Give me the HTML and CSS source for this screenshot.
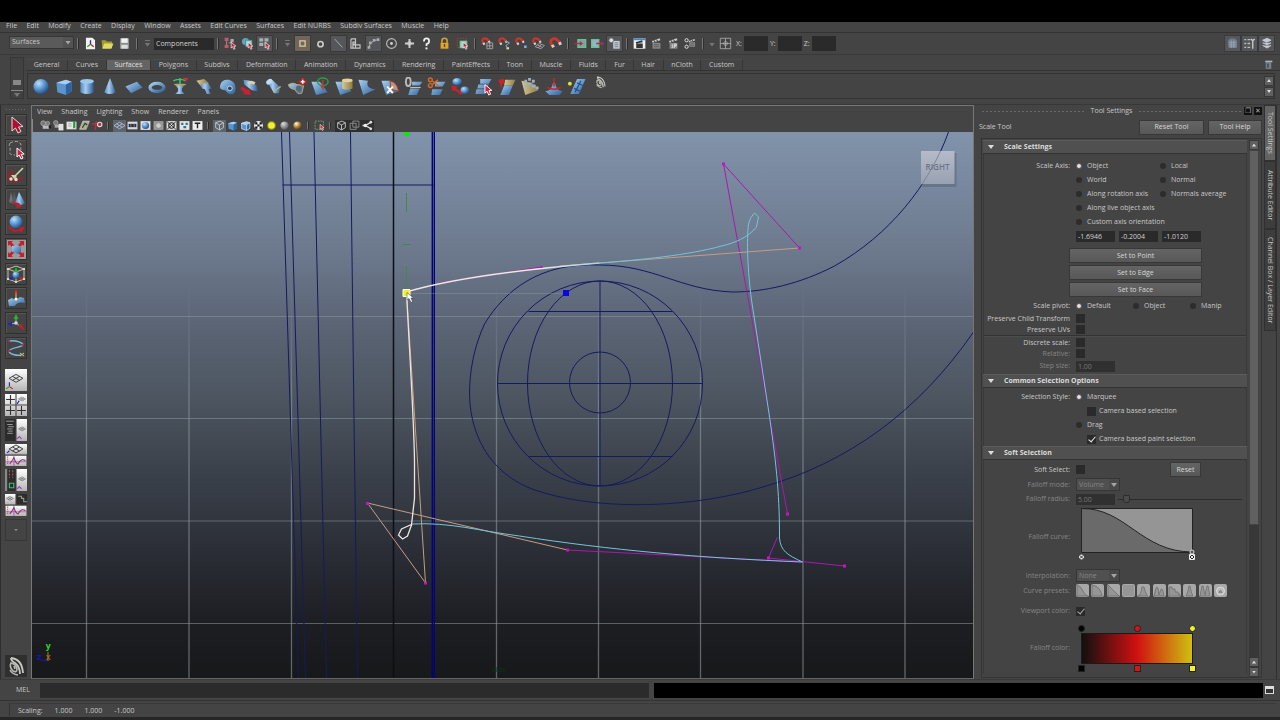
FILE: index.html
```html
<!DOCTYPE html>
<html lang="en">
<head>
    <meta charset="UTF-8">
    <meta name="viewport" content="width=device-width, initial-scale=1.0">
    <title>Scale Tool</title>
    <link rel="stylesheet" href="styles.css">
</head>
<body>

<!-- icon sprite -->
<svg class="sprite" aria-hidden="true">
    <defs>
        <linearGradient id="blue" x1="0" y1="0" x2="1" y2="1"><stop offset="0" stop-color="#a8d0f2"/><stop offset="1" stop-color="#2c609c"/></linearGradient>
        <linearGradient id="tube" x1="0" y1="0" x2="1" y2="0"><stop offset="0" stop-color="#4f86c0"/><stop offset=".4" stop-color="#a5cdf0"/><stop offset="1" stop-color="#2c5c94"/></linearGradient>
        <linearGradient id="tan" x1="0" y1="0" x2="1" y2="0"><stop offset="0" stop-color="#d6c793"/><stop offset="1" stop-color="#8d7c45"/></linearGradient>
        <linearGradient id="pane" x1="0" y1="0" x2="0" y2="1"><stop offset="0" stop-color="#ffffff"/><stop offset="1" stop-color="#b4b4b4"/></linearGradient>
        <radialGradient id="ball" cx=".35" cy=".3" r=".75"><stop offset="0" stop-color="#bfe0fa"/><stop offset=".5" stop-color="#5b97d2"/><stop offset="1" stop-color="#1f4a80"/></radialGradient>
        <radialGradient id="gold" cx=".35" cy=".3" r=".75"><stop offset="0" stop-color="#fff"/><stop offset=".4" stop-color="#c9a04a"/><stop offset="1" stop-color="#4b3510"/></radialGradient>
        <radialGradient id="grey" cx=".35" cy=".3" r=".75"><stop offset="0" stop-color="#ddd"/><stop offset="1" stop-color="#555"/></radialGradient>
    </defs>
    <symbol id="cursor" viewBox="0 0 20 20"><path d="M6 2v14l3.500-3 2.500 5 3-1.500-2.500-4.500 4.500-.5z" fill="#b01030" stroke="#e8d8d8" stroke-width="1"/></symbol>
    <symbol id="mini-cursor" viewBox="0 0 20 20"><path d="M11 8v9l2.200-2 1.800 4 2-1-1.800-3.600 3-.4z" fill="#d02040" stroke="#fff" stroke-width="1"/></symbol>
    <symbol id="lasso" viewBox="0 0 20 20"><path d="M4 3C8 1 12 1 14 3s0 5 1 7M4 3c-2 2 1 5 0 8s1 4 5 4" fill="none" stroke="#aaa" stroke-dasharray="3 2"/><use href="#mini-cursor"/></symbol>
    <symbol id="paint" viewBox="0 0 20 20"><path d="M8 7Q2 7 2 12c1 6 11 5 14 0" fill="none" stroke="#a51f1f" stroke-width="1.800"/><path d="M8 12l9-9" stroke="#d9d5a0" stroke-width="1.600"/><path d="M5 10l4 0 2 2-3 2z" fill="#d8d0a0"/><circle cx="5" cy="14" r="1.700" fill="#e8e0c8"/><circle cx="10" cy="14.500" r="1.700" fill="#e8e0c8"/></symbol>
    <symbol id="move" viewBox="0 0 20 20"><path d="M5 3l-2 10 5 2z" fill="#707478"/><path d="M8 2l-2 12 6 2z" fill="#555a60"/><path d="M13 3l-4 11q5 4 10 0z" fill="url(#tube)"/><path d="M3 12l8 4-1 3 6-1-3-4" fill="#c0202a"/></symbol>
    <symbol id="rotate" viewBox="0 0 20 20"><circle cx="10" cy="8" r="6.500" fill="url(#ball)"/><path d="M2 12q3 8 12 5l1 2 4-6-6 0 1 2q-6 3-10-3z" fill="#c61c22"/></symbol>
    <symbol id="scale" viewBox="0 0 20 20"><path d="M2 2h5l-1.500 1.500 3 3-2 2-3-3L2 7zM18 2h-5l1.500 1.500-3 3 2 2 3-3L18 7zM2 18h5l-1.500-1.500 3-3-2-2-3 3L2 13zM18 18h-5l1.500-1.500-3-3 2-2 3 3L18 13z" fill="#c81e2c"/><path d="M6 7l6-1 3 2v5l-3 2-6-2z" fill="url(#blue)"/></symbol>
    <symbol id="universal" viewBox="0 0 20 20"><path d="M2 5l8-3 8 3v10l-8 3-8-3zM2 5l8 3 8-3M10 8v10" fill="none" stroke="#ccc" stroke-width=".9"/><circle cx="10" cy="11" r="3.500" fill="url(#ball)"/><path d="M10 3l2 5H8z" fill="#2b2"/><path d="M13 12l5 3-4 1z" fill="#c22"/><path d="M7 12l-5 3 4 1z" fill="#22c"/><path d="M1 4h2v2H1zM17 4h2v2h-2zM1 14h2v2H1zM17 14h2v2h-2zM9 17h2v2H9z" fill="#e4e080"/></symbol>
    <symbol id="softmod" viewBox="0 0 20 20"><path d="M2 12l4-2q3 3 8-1l4 1 1 5q-8-2-10 3l-6 0z" fill="url(#blue)"/><path d="M10 12V5" stroke="#ddc050"/><path d="M10 1l2 4H8z" fill="#d22"/><circle cx="10" cy="11" r="1.500" fill="#ffc"/></symbol>
    <symbol id="manip" viewBox="0 0 20 20"><path d="M10 10V5M10 10l-5 1M10 10l5 4" stroke="#aaa"/><path d="M10 1l2.500 5h-5z" fill="#2bb52b"/><path d="M1 11l5-2v4z" fill="#2020d0"/><path d="M13 13l2-2 3 6z" fill="#c81e1e" stroke="#c81e1e"/><circle cx="10" cy="10" r="1.800" fill="#bde"/></symbol>
    <symbol id="lasttool" viewBox="0 0 20 20"><path d="M3 3C11 2 17 5 17 7S3 10 3 13s8 5 12 4" fill="none" stroke="#7fb3dd" stroke-width="1.500"/><path d="M2 2h2v2H2zM16 6h2v2h-2zM2 12h2v2H2z" fill="#a2305a"/><path d="M14 15l4 3m0-3l-4 3" stroke="#cfcf80"/></symbol>
    <symbol id="floor" viewBox="0 0 20 10"><path d="M3 5l7-4 7 4-7 4zM6.500 3l7 4M13.500 3l-7 4" fill="none" stroke="#333" stroke-width=".9"/></symbol>
    <symbol id="wave" viewBox="0 0 20 10"><path d="M0 0h20v10H0z" fill="url(#pane)"/><path d="M4 8q2-2 4-6 2 6 4 6 3-6 7-3" fill="none" stroke="#734057"/><path d="M8 0v10M0 6h20" stroke="#a0a" stroke-width=".5"/><path d="M2 1v8" stroke="#c44" stroke-dasharray="1 1"/></symbol>
    <symbol id="lay-single" viewBox="0 0 20 20"><path d="M0 0h20v20H0z" fill="url(#pane)"/><use href="#floor" x="1" y="3" width="18" height="11"/><path d="M4 16V12" stroke="#22c"/><path d="M4 16l3 2" stroke="#c22"/><path d="M4 16l-3 2" stroke="#2a2"/></symbol>
    <symbol id="lay-four" viewBox="0 0 20 20"><path d="M0 0h9.500v9.500H0zM10.500 0H20v9.500h-9.500zM0 10.500h9.500V20H0zM10.500 10.500H20V20h-9.500z" fill="url(#pane)"/><path d="M5 1v8M1 5h8M5 11v8M1 15h8M15 11v8M11 15h8" stroke="#333"/><use href="#floor" x="11" y="2" width="9" height="5"/><path d="M11 9l2-3" stroke="#22c"/></symbol>
    <symbol id="lay-outliner" viewBox="0 0 20 20"><path d="M0 0h9.500v20H0z" fill="#2c2c2c"/><path d="M10.500 0H20v20h-9.500z" fill="url(#pane)"/><path d="M1 2h7M2 5h5M3 7h5M2 9h5M3 11h4M2 13h5" stroke="#9a9a9a" stroke-width=".9"/><use href="#floor" x="11" y="6" width="9" height="6"/><path d="M11 18l2-2 2 2" fill="none" stroke="#a3c"/></symbol>
    <symbol id="lay-graph" viewBox="0 0 20 20"><path d="M0 0h20v9.500H0z" fill="url(#pane)"/><use href="#floor" y="0" width="20" height="9"/><path d="M2 8l2-2" stroke="#22c"/><use href="#wave" y="10.500" width="20" height="9.500"/></symbol>
    <symbol id="lay-shade" viewBox="0 0 20 20"><path d="M0 0h9.500v20H0z" fill="#2c2c2c"/><path d="M0 0h2v20H0z" fill="#888"/><path d="M10.500 0H20v20h-9.500z" fill="url(#pane)"/><path d="M4 1v7M7 1v7" stroke="#a56" stroke-dasharray="2 1"/><path d="M4 13h4v4H4z" fill="none" stroke="#4b7"/><use href="#floor" x="11" y="6" width="9" height="6"/><path d="M11 18l2-2 2 2" fill="none" stroke="#a3c"/></symbol>
    <symbol id="lay-hyper" viewBox="0 0 20 20"><path d="M0 0h9.500v9.500H0z" fill="url(#pane)"/><path d="M10.500 0H20v9.500h-9.500z" fill="#2c2c2c"/><use href="#floor" y="1" width="9" height="6"/><path d="M12 2h3v2h2v3h3" fill="none" stroke="#9a9a80"/><use href="#wave" y="10.500" width="20" height="9.500"/></symbol>
    <symbol id="paw" viewBox="0 0 20 20"><path d="M5 2Q16 3 17 17M5 2Q5 5 9 7 14 11 14 18" fill="none" stroke="#c9c9c4" stroke-width="1.800"/><path d="M5 7Q10 8 11 13 11 17 7 15 3 11 5 7zM4 14q2 4 8 5M8 10l1 3" fill="none" stroke="#b9b9b4" stroke-width="1.600"/></symbol>

    <symbol id="new" viewBox="0 0 20 20"><path d="M3 1h10l4 4v14H3z" fill="#f2f2f2"/><path d="M10 11V5" stroke="#22c" stroke-width="2"/><path d="M10 11l5 4" stroke="#c22" stroke-width="2"/><path d="M10 11l-5 4" stroke="#2a2" stroke-width="2"/></symbol>
    <symbol id="open" viewBox="0 0 20 20"><path d="M1 5h6l2 2h8v10H2z" fill="#a39a2a"/><path d="M5 10h14l-3 8H2z" fill="#e2d86a"/></symbol>
    <symbol id="save" viewBox="0 0 20 20"><path d="M3 2h14v16H3z" fill="#8d8d8d"/><path d="M5 2h10v7H5z" fill="#f0f0f0"/><path d="M5 12h10v6H5z" fill="#ddd"/></symbol>
    <symbol id="sel-h" viewBox="0 0 20 20"><path d="M1 1h6v5H1zM1 12h6v5H1z" fill="#c25b68"/><path d="M4 6v6M7 9h4V5" stroke="#bbb" fill="none"/><path d="M10 3h5v5h-5z" fill="#a8a8a8"/><use href="#mini-cursor"/></symbol>
    <symbol id="sel-o" viewBox="0 0 20 20"><circle cx="7" cy="7" r="5.500" fill="#69a0c8"/><path d="M7 5h10v10H7z" fill="#9fcfc9" stroke="#286"/><use href="#mini-cursor"/></symbol>
    <symbol id="sel-c" viewBox="0 0 20 20"><path d="M2 2h6v5H2zM10 2h6v5h-6zM2 9h6v5H2z" fill="#a9b3ab"/><path d="M9 8h5v5H9z" fill="#3a9a6a"/><use href="#mini-cursor"/></symbol>
    <symbol id="m-pt" viewBox="0 0 20 20"><path d="M6 6h8v8H6z" fill="none" stroke="#e0c8a4" stroke-width="2"/></symbol>
    <symbol id="m-dot" viewBox="0 0 20 20"><circle cx="10" cy="11" r="4" fill="none" stroke="#ccc" stroke-width="2.500"/></symbol>
    <symbol id="m-line" viewBox="0 0 20 20"><path d="M4 3l12 13" stroke="#b5b5b5" stroke-width="1.300"/></symbol>
    <symbol id="m-face" viewBox="0 0 20 20"><path d="M3 3h7v5H6v3h4V8M3 3v14h14v-5H6M10 12v5M6 8v9" fill="none" stroke="#c4c4c4" stroke-width="1.800"/></symbol>
    <symbol id="m-hull" viewBox="0 0 20 20"><path d="M3 17Q4 6 17 4" fill="none" stroke="#bbb" stroke-width="1.300"/><path d="M1 14h4v4H1zM3 7h4v4H3zM9 3h4v4H9zM15 2h4v4h-4z" fill="#aaa"/></symbol>
    <symbol id="m-circ" viewBox="0 0 20 20"><circle cx="10" cy="10" r="7.500" fill="none" stroke="#bbb" stroke-width="1.700"/><circle cx="10" cy="10" r="2.300" fill="#ccc"/></symbol>
    <symbol id="m-plus" viewBox="0 0 20 20"><path d="M10 3v14M3 10h14" stroke="#ccc" stroke-width="3"/><circle cx="10" cy="10" r="3.300" fill="#ccc"/></symbol>
    <symbol id="m-q" viewBox="0 0 20 20"><path d="M6 7q0-5 4-5t4 4-4 5v3" fill="none" stroke="#eee" stroke-width="2.700"/><path d="M8.500 16h3v3h-3z" fill="#eee"/></symbol>
    <symbol id="lock" viewBox="0 0 20 20"><path d="M6 10V6q0-4 4-4t4 4v4" fill="none" stroke="#d0a030" stroke-width="2.500"/><path d="M4 9h12v9H4z" fill="#e0a62c"/><path d="M9 11h2v4H9z" fill="#4a3300"/></symbol>
    <symbol id="hilite" viewBox="0 0 20 20"><path d="M2 2h14v14H2z" fill="none" stroke="#c33" stroke-width="1.500" stroke-dasharray="2 2"/><path d="M6 6h11v11H6z" fill="#9ad0c8" stroke="#3b7"/><use href="#mini-cursor"/></symbol>
    <symbol id="magnet" viewBox="0 0 20 20"><path d="M5 14Q0 5 6 3T17 10" fill="none" stroke="#c8382a" stroke-width="4.500"/><path d="M3 13l4-2 2 4-4 2zM14 9l4-2 2 4-4 2z" fill="#d0d0d0"/></symbol>
    <symbol id="mag-grid" viewBox="0 0 20 20"><use href="#magnet" width="15" height="15"/><path d="M9 9h9v9H9zM9 13.500h9M13.500 9v9" fill="none" stroke="#aaa" stroke-width="1.300"/></symbol>
    <symbol id="mag-curve" viewBox="0 0 20 20"><use href="#magnet" width="15" height="15"/><path d="M11 7q10 1 4 4t2 6" fill="none" stroke="#7ba7c8" stroke-width="1.600"/><path d="M13 16h4v3h-4z" fill="#dd8"/></symbol>
    <symbol id="mag-pt" viewBox="0 0 20 20"><use href="#magnet" width="15" height="15"/><path d="M14 13h4v4h-4z" fill="#6bb3e6"/></symbol>
    <symbol id="mag-plane" viewBox="0 0 20 20"><use href="#magnet" width="15" height="15"/><path d="M5 15l6-5 8 3-5 5zM8 12l8 4M15 11l-6 6" fill="none" stroke="#aaa" stroke-width="1.300"/></symbol>
    <symbol id="inp" viewBox="0 0 20 20"><path d="M6 4h12v12H6z" fill="#78a6a8" stroke="#6cc08a" stroke-width="2"/><path d="M1 9h8V6l5 4-5 4v-3H1z" fill="#b52a48"/></symbol>
    <symbol id="outp" viewBox="0 0 20 20"><path d="M1 4h11v12H1z" fill="#8fb6c8" stroke="#6cc08a" stroke-width="2"/><path d="M8 9h8V6l4 4-4 4v-3H8z" fill="#b52a48"/></symbol>
    <symbol id="hist" viewBox="0 0 20 20"><path d="M8 6h10v12H8z" fill="#c9cdd4"/><path d="M10 9h6M10 12h6M10 15h6" stroke="#667" stroke-width="1.200"/><circle cx="5" cy="5" r="3.500" fill="#ddd" stroke="#666"/></symbol>
    <symbol id="clap-win" viewBox="0 0 20 20"><path d="M1 2h18v16H1z" fill="#f0f0f0"/><path d="M1 2h18v3H1z" fill="#4b86b8"/><path d="M5 10h10v7H5zM4 8l10-3 1 3-10 2z" fill="#333"/></symbol>
    <symbol id="clap" viewBox="0 0 20 20"><path d="M4 9h12v9H4z" fill="#8a8a8a"/><path d="M3 6l12-4 1 3L4 9z" fill="#c9c9c9"/><path d="M6 5l2 3M10 4l2 3" stroke="#333" stroke-width="1.500"/><path d="M6 12h8M6 15h8" stroke="#444"/></symbol>
    <symbol id="clap-ipr" viewBox="0 0 20 20"><use href="#clap"/><path d="M8 11v6M11 17v-6h3v3h-3" fill="none" stroke="#eee" stroke-width="1.500"/></symbol>
    <symbol id="clap-opt" viewBox="0 0 20 20"><use href="#clap" x="5" width="15" height="18"/><circle cx="4" cy="5" r="2.500" fill="none" stroke="#ddd" stroke-width="1.500"/><circle cx="4" cy="15" r="2.500" fill="none" stroke="#ddd" stroke-width="1.500"/></symbol>
    <symbol id="cross" viewBox="0 0 20 20"><path d="M2 2h16v16H2zM10 2v16M2 10h16" fill="none" stroke="#aaa" stroke-width="1.300"/><circle cx="10" cy="10" r="3" fill="none" stroke="#bbb"/></symbol>
    <symbol id="r-attr" viewBox="0 0 20 20"><path d="M3 5l4-3h6l4 3v12H4z" fill="#6d7887"/><path d="M4 8h12M4 11h12M4 14h12M8 5v12M12 5v12" stroke="#a6b4c6"/></symbol>
    <symbol id="r-tool" viewBox="0 0 20 20"><path d="M2 4h3M7 4h4M2 10h3M7 10h4M2 16h3M7 16h4" stroke="#bbb" stroke-width="2.200"/><path d="M15 5v13M12 3q3 4 6 0" fill="none" stroke="#ccc" stroke-width="2"/></symbol>
    <symbol id="r-chan" viewBox="0 0 20 20"><path d="M4 5l7-3 6 3-7 3zM4 9l7 3 6-3M4 13l7 4 6-4" fill="#c4c9d2" stroke="#c4c9d2" stroke-width="1.500"/></symbol>
    <symbol id="trash" viewBox="0 0 20 20"><path d="M5 6h10v12H5z" fill="#77808a"/><path d="M4 3h13v3H4z" fill="#aab2ba"/><path d="M9 8v8" stroke="#333" stroke-width="2"/></symbol>

    <symbol id="s-sphere" viewBox="0 0 20 20"><circle cx="10" cy="10" r="8" fill="url(#ball)"/></symbol>
    <symbol id="s-cube" viewBox="0 0 20 20"><path d="M2 6l10-3 6 2v10l-6 4-9-3z" fill="#5b94cc"/><path d="M2 6l10-3 6 2-6 3z" fill="#a9cff0"/><path d="M12 8l6-3v10l-6 4z" fill="#2d649f"/></symbol>
    <symbol id="s-cyl" viewBox="0 0 20 20"><path d="M3 4v12q7 4 14 0V4z" fill="url(#tube)"/><ellipse cx="10" cy="4.500" rx="7" ry="2.500" fill="#9cc8ee"/></symbol>
    <symbol id="s-cone" viewBox="0 0 20 20"><path d="M10 1L4 16q6 4 12 0z" fill="url(#tube)"/></symbol>
    <symbol id="s-plane" viewBox="0 0 20 20"><path d="M1 10l12-5 6 6-12 6z" fill="url(#blue)"/></symbol>
    <symbol id="s-torus" viewBox="0 0 20 20"><ellipse cx="10" cy="11" rx="7.300" ry="4.300" fill="none" stroke="url(#blue)" stroke-width="3.500"/></symbol>
    <symbol id="s-revolve" viewBox="0 0 20 20"><path d="M4 7h12l-4 5v3l3 3H5l3-3v-3z" fill="url(#tube)"/><path d="M3 4q7-3 13 0M10 1v8" fill="none" stroke="#3c6" stroke-width="1.500"/><path d="M13 1h6l-3 4z" fill="#c33"/><path d="M4 8h12" stroke="#c9a040" stroke-width="1.300"/></symbol>
    <symbol id="s-loft" viewBox="0 0 20 20"><path d="M2 4l8-2 5 4-2 4-6 0z" fill="url(#tan)"/><path d="M6 8l8-2 4 6-3 1 2 5-4 0-2-5-3-1z" fill="url(#tube)"/></symbol>
    <symbol id="s-planar" viewBox="0 0 20 20"><path d="M3 8Q5 2 12 3q7 2 7 9t-6 6q-3-1-5-4Q1 14 3 8z" fill="url(#blue)"/><circle cx="13" cy="12" r="2.500" fill="#345" stroke="#bde"/></symbol>
    <symbol id="s-extrude" viewBox="0 0 20 20"><path d="M3 3l7 1 7 5 1 6-6-1-8-6z" fill="url(#tube)"/><path d="M8 7q3-3 7 0" fill="none" stroke="#d8cfae" stroke-width="3"/><path d="M1 10l7 4 1-2 2 7-8-1 1-2-4-3z" fill="#cc2030"/></symbol>
    <symbol id="s-birail" viewBox="0 0 20 20"><path d="M3 5l4-3 10 9-2 6-5 0z" fill="url(#tube)"/><ellipse cx="5" cy="5" rx="3.500" ry="2.500" transform="rotate(-35 5 5)" fill="#bcdcf6"/><path d="M10 15l7-5" stroke="#c8b070" stroke-width="1.500"/></symbol>
    <symbol id="s-bound" viewBox="0 0 20 20"><path d="M1 8q5-3 9 0l7 1-2 8q-5 2-7-4Q2 13 1 8z" fill="url(#blue)" stroke="#c4b070"/><circle cx="12" cy="12" r="3" fill="#567"/><path d="M16 1v8M12 5h8" stroke="#c22" stroke-width="3"/><path d="M16 3v4M14 5h4" stroke="#fff" stroke-width="1.500"/></symbol>
    <symbol id="s-proj" viewBox="0 0 20 20"><path d="M1 5h9l8 11-12 3z" fill="url(#blue)"/><ellipse cx="13" cy="5" rx="5.500" ry="4" fill="none" stroke="#2c9c4c" stroke-width="1.500"/><path d="M13 3v9l-2-3" fill="none" stroke="#c33" stroke-width="1.500"/></symbol>
    <symbol id="s-inter" viewBox="0 0 20 20"><path d="M1 5h7l10 10-12 4z" fill="url(#blue)"/><path d="M8 3v9q5 3 11 0V3z" fill="url(#tan)"/><ellipse cx="13.500" cy="3.500" rx="5.500" ry="2" fill="#e0d29c"/></symbol>
    <symbol id="s-trim" viewBox="0 0 20 20"><path d="M1 3l10 1q-3 8 8 9L6 19z" fill="url(#blue)"/></symbol>
    <symbol id="s-untrim" viewBox="0 0 20 20"><path d="M1 4h9l9 11L6 19z" fill="url(#blue)"/><path d="M10 4q8 2 9 11l-8-2z" fill="#b49a7c" stroke="#a33"/><path d="M7 10l6 7M13 10l-6 7" stroke="#fff" stroke-width="2"/></symbol>
    <symbol id="s-attach" viewBox="0 0 20 20"><ellipse cx="4" cy="5" rx="2.500" ry="4.500" fill="none" stroke="#bbb" stroke-width="2"/><path d="M8 5h11l-3 4H8zM6 12h10l-3 7H4z" fill="url(#blue)"/><path d="M6 11h11" stroke="#d6cfae"/></symbol>
    <symbol id="s-detach" viewBox="0 0 20 20"><path d="M8 5h11l-3 5H8zM5 13h11l-3 6H4z" fill="url(#blue)"/><circle cx="3" cy="3" r="2" fill="none" stroke="#d06a28" stroke-width="1.500"/><circle cx="3" cy="9" r="2" fill="none" stroke="#d06a28" stroke-width="1.500"/><path d="M5 4l7 6M5 8l6-5" stroke="#d06a28" stroke-width="1.500"/></symbol>
    <symbol id="s-move" viewBox="0 0 20 20"><ellipse cx="7" cy="5" rx="5" ry="4" fill="url(#ball)"/><ellipse cx="15" cy="14" rx="4.500" ry="4" fill="url(#ball)"/><path d="M1 9l6 1-1 2 7 5-2 2-7-5-2 1z" fill="#c8222c"/></symbol>
    <symbol id="s-insert" viewBox="0 0 20 20"><path d="M6 2h12l-3 5H6zM4 8h11l-2 4H3zM2 13h11l-2 5H1z" fill="url(#blue)"/><use href="#mini-cursor"/></symbol>
    <symbol id="s-extend" viewBox="0 0 20 20"><path d="M8 3h11l-3 6H7z" fill="url(#tan)"/><path d="M7 9h9l-4 10H3z" fill="url(#blue)"/><path d="M1 4l5-2 1 4-3 1v5" fill="#c8222c" stroke="#c8222c"/></symbol>
    <symbol id="s-sculpt" viewBox="0 0 20 20"><path d="M1 4l4 15 14-5-7-8z" fill="url(#tan)"/><path d="M4 3h3v3H4zM8 1h3v3H8zM12 3h3v3h-3zM8 6h3v3H8zM12 8h4v3h-4zM16 10h3v3h-3zM5 8h3v3H5z" fill="#9fb0bd"/></symbol>
    <symbol id="s-softm" viewBox="0 0 20 20"><path d="M1 15q7-1 8-9h2q1 8 8 9l-3 4H5z" fill="url(#blue)"/><path d="M10 1v9M3 11q7 4 14 0" stroke="#c22" stroke-width="1.600" fill="none"/></symbol>
    <symbol id="s-stitch" viewBox="0 0 20 20"><path d="M10 2h9l-7 16H3z" fill="url(#blue)"/><path d="M14 4l-6 12M10 6l6 3M7 12l6 3" stroke="#1c4f93" stroke-width="1.300"/><circle cx="2.500" cy="7" r="2" fill="#e6e030"/></symbol>

    <symbol id="v-cam" viewBox="0 0 20 20"><circle cx="6" cy="6" r="4.500" fill="#777" stroke="#ccc"/><circle cx="14" cy="6" r="3.500" fill="#777" stroke="#ccc"/><path d="M5 10h11v6H5z" fill="#bbb"/><path d="M16 11l4-2v7l-4-2z" fill="#222"/></symbol>
    <symbol id="v-camattr" viewBox="0 0 20 20"><circle cx="5" cy="5" r="4" fill="#777" stroke="#ccc"/><path d="M3 9h8v5H3z" fill="#aaa"/><path d="M10 7h9v12h-9z" fill="#e0e0e0"/></symbol>
    <symbol id="v-book" viewBox="0 0 20 20"><path d="M1 3h18v14H1z" fill="#e6e6e6"/><path d="M13 2h4v14l-2-2-2 2z" fill="#2a9a3a"/><path d="M4 7h6M4 11h6" stroke="#777"/></symbol>
    <symbol id="v-img" viewBox="0 0 20 20"><path d="M7 2h12l-6 15H1z" fill="#a8b08a" stroke="#ddd"/><path d="M6 14l5-8 4 3" fill="none" stroke="#333" stroke-width="2"/></symbol>
    <symbol id="v-pan" viewBox="0 0 20 20"><path d="M1 7h9M8 2l-2 16" stroke="#b0343c" stroke-width="3"/><circle cx="14" cy="8" r="4" fill="#b0343c" stroke="#ddd" stroke-width="2"/></symbol>
    <symbol id="v-grid" viewBox="0 0 20 20"><path d="M0 10l10-6 10 6-10 6zM5 7l10 6M15 7L5 13" fill="none" stroke="#b8c6d4" stroke-width="1.500"/></symbol>
    <symbol id="v-film" viewBox="0 0 20 20"><path d="M1 3h18v14H1z" fill="#dadada"/><path d="M3 7h14v6H3z" fill="#234"/><path d="M7 7v6M13 7v6" stroke="#9bd"/></symbol>
    <symbol id="v-res" viewBox="0 0 20 20"><path d="M1 2h18v16H1z" fill="#e0e0e0"/><circle cx="10" cy="10" r="6.500" fill="url(#ball)"/></symbol>
    <symbol id="v-gate" viewBox="0 0 20 20"><path d="M1 2h18v16H1z" fill="#9a9a9a"/><circle cx="10" cy="10" r="5" fill="#ccc" stroke="#777"/></symbol>
    <symbol id="v-chart" viewBox="0 0 20 20"><path d="M1 2h18v16H1z" fill="#ddd"/><path d="M2 3l16 14M18 3L2 17" stroke="#222" stroke-width="1.500"/><circle cx="10" cy="10" r="5" fill="none" stroke="#222" stroke-width="2"/></symbol>
    <symbol id="v-safe" viewBox="0 0 20 20"><path d="M1 2h18v16H1z" fill="#e4e4e4"/><path d="M4 5h4v4H4zM12 5h4v4h-4zM8 11h5v4H8z" fill="#277a90"/></symbol>
    <symbol id="v-text" viewBox="0 0 20 20"><path d="M1 2h18v16H1z" fill="#ececec"/><path d="M5 6h10M10 6v9" stroke="#222" stroke-width="2.500"/></symbol>
    <symbol id="v-wire" viewBox="0 0 20 20"><path d="M3 5l8-3 6 3v9l-7 4-7-4zM3 5l7 4 7-4M10 9v9" fill="none" stroke="#d2d2d2" stroke-width="1.500"/></symbol>
    <symbol id="v-wshade" viewBox="0 0 20 20"><use href="#s-cube"/><path d="M3 6l9-3 6 2v10l-6 4-9-3zM3 6l9 3 6-4M12 9v10" fill="none" stroke="#e4eefa" stroke-width="1.200"/></symbol>
    <symbol id="v-check" viewBox="0 0 20 20"><circle cx="10" cy="10" r="8" fill="#eee"/><path d="M4 4h4v4H4zM12 4h4v4h-4zM8 8h4v4H8zM4 12h4v4H4zM12 12h4v4h-4z" fill="#111"/></symbol>
    <symbol id="v-light" viewBox="0 0 20 20"><circle cx="10" cy="10" r="8" fill="#8c8c20"/><circle cx="10" cy="10" r="6" fill="#f2f02a"/></symbol>
    <symbol id="v-flat" viewBox="0 0 20 20"><circle cx="10" cy="10" r="7.500" fill="url(#grey)"/></symbol>
    <symbol id="v-gold" viewBox="0 0 20 20"><circle cx="10" cy="10" r="7.500" fill="url(#gold)"/></symbol>
    <symbol id="v-iso" viewBox="0 0 20 20"><path d="M2 2h15v15H2z" fill="none" stroke="#6fa47e" stroke-width="1.800" stroke-dasharray="3 2"/><use href="#mini-cursor"/></symbol>
    <symbol id="v-xray" viewBox="0 0 20 20"><path d="M2 6h11v11H2zM7 2h11v11H7z" fill="none" stroke="#888" stroke-width="1.800"/></symbol>
    <symbol id="v-joint" viewBox="0 0 20 20"><path d="M17 4L6 10l11 6M6 10H1" fill="none" stroke="#ddd" stroke-width="2.500"/><circle cx="6" cy="10" r="3" fill="#eee"/><circle cx="16" cy="4" r="2.500" fill="#ddd"/><circle cx="16" cy="16" r="2.500" fill="#ddd"/></symbol>
</svg>

<div class="app">
    <nav class="menubar">
        <a href="#">File</a><a href="#">Edit</a><a href="#">Modify</a><a href="#">Create</a><a href="#">Display</a><a href="#">Window</a><a href="#">Assets</a><a href="#">Edit Curves</a><a href="#">Surfaces</a><a href="#">Edit NURBS</a><a href="#">Subdiv Surfaces</a><a href="#">Muscle</a><a href="#">Help</a>
    </nav>

    <!-- status line -->
    <div class="statusline">
        <span class="combo combo-mode"><select aria-label="Menu set"><option>Surfaces</option></select></span>
        <i class="sep"></i>
        <div class="group">
            <button aria-label="New scene"><svg><use href="#new"/></svg></button>
            <button aria-label="Open scene"><svg><use href="#open"/></svg></button>
            <button aria-label="Save scene"><svg><use href="#save"/></svg></button>
        </div>
        <i class="sep"></i><i class="tri"></i>
        <input class="field mask" type="text" aria-label="Selection mask" value="Components">
        <i class="sep"></i>
        <div class="group">
            <button aria-label="Select by hierarchy"><svg><use href="#sel-h"/></svg></button>
            <button aria-label="Select by object"><svg><use href="#sel-o"/></svg></button>
            <button class="on" aria-label="Select by component"><svg><use href="#sel-c"/></svg></button>
        </div>
        <i class="sep"></i><i class="tri"></i>
        <div class="group masks">
            <button class="on warm" aria-label="Points"><svg><use href="#m-pt"/></svg></button>
            <button aria-label="Parm points"><svg><use href="#m-dot"/></svg></button>
            <button class="on" aria-label="Lines"><svg><use href="#m-line"/></svg></button>
            <button aria-label="Faces"><svg><use href="#m-face"/></svg></button>
            <button class="on" aria-label="Hulls"><svg><use href="#m-hull"/></svg></button>
            <button aria-label="Pivots"><svg><use href="#m-circ"/></svg></button>
            <button aria-label="Handles"><svg><use href="#m-plus"/></svg></button>
            <button aria-label="Miscellaneous"><svg><use href="#m-q"/></svg></button>
            <button aria-label="Lock selection"><svg><use href="#lock"/></svg></button>
            <button aria-label="Highlight selection"><svg><use href="#hilite"/></svg></button>
        </div>
        <i class="sep"></i>
        <div class="group">
            <button aria-label="Snap to grids"><svg><use href="#mag-grid"/></svg></button>
            <button aria-label="Snap to curves"><svg><use href="#mag-curve"/></svg></button>
            <button aria-label="Snap to points"><svg><use href="#mag-pt"/></svg></button>
            <button aria-label="Snap to view planes"><svg><use href="#mag-plane"/></svg></button>
            <button aria-label="Make live"><svg><use href="#magnet"/></svg></button>
        </div>
        <i class="sep"></i>
        <div class="group">
            <button aria-label="Inputs"><svg><use href="#inp"/></svg></button>
            <button aria-label="Outputs"><svg><use href="#outp"/></svg></button>
            <button class="on" aria-label="Construction history"><svg><use href="#hist"/></svg></button>
        </div>
        <i class="sep"></i>
        <div class="group">
            <button aria-label="Render view"><svg><use href="#clap-win"/></svg></button>
            <button aria-label="Render"><svg><use href="#clap"/></svg></button>
            <button aria-label="IPR render"><svg><use href="#clap-ipr"/></svg></button>
            <button aria-label="Render settings"><svg><use href="#clap-opt"/></svg></button>
        </div>
        <i class="sep"></i><i class="tri slim"></i>
        <div class="group">
            <button aria-label="Input mode"><svg><use href="#cross"/></svg></button>
        </div>
        <label class="coord">X: <input class="field" type="text"></label>
        <label class="coord">Y: <input class="field" type="text"></label>
        <label class="coord">Z: <input class="field" type="text"></label>
        <div class="group side-toggles">
            <button class="on" aria-label="Attribute editor"><svg><use href="#r-attr"/></svg></button>
            <button class="on" aria-label="Tool settings"><svg><use href="#r-tool"/></svg></button>
            <button class="on" aria-label="Channel box"><svg><use href="#r-chan"/></svg></button>
        </div>
    </div>

    <!-- shelf -->
    <div class="shelf">
        <div class="shelf-menu"><i class="knob"></i><i class="tri"></i></div>
        <div class="shelf-main">
            <div class="shelf-top">
                <div class="shelf-tabs">
                    <button>General</button><button>Curves</button><button class="active">Surfaces</button><button>Polygons</button><button>Subdivs</button><button>Deformation</button><button>Animation</button><button>Dynamics</button><button>Rendering</button><button>PaintEffects</button><button>Toon</button><button>Muscle</button><button>Fluids</button><button>Fur</button><button>Hair</button><button>nCloth</button><button>Custom</button>
                </div>
                <svg class="trash"><use href="#trash"/></svg>
            </div>
            <div class="shelf-row">
                <div class="shelf-icons">
                    <button aria-label="Sphere"><svg><use href="#s-sphere"/></svg></button>
                    <button aria-label="Cube"><svg><use href="#s-cube"/></svg></button>
                    <button aria-label="Cylinder"><svg><use href="#s-cyl"/></svg></button>
                    <button aria-label="Cone"><svg><use href="#s-cone"/></svg></button>
                    <button aria-label="Plane"><svg><use href="#s-plane"/></svg></button>
                    <button aria-label="Torus"><svg><use href="#s-torus"/></svg></button>
                    <button aria-label="Revolve"><svg><use href="#s-revolve"/></svg></button>
                    <button aria-label="Loft"><svg><use href="#s-loft"/></svg></button>
                    <button aria-label="Planar"><svg><use href="#s-planar"/></svg></button>
                    <button aria-label="Extrude"><svg><use href="#s-extrude"/></svg></button>
                    <button aria-label="Birail"><svg><use href="#s-birail"/></svg></button>
                    <button aria-label="Boundary"><svg><use href="#s-bound"/></svg></button>
                    <button aria-label="Project curve"><svg><use href="#s-proj"/></svg></button>
                    <button aria-label="Intersect"><svg><use href="#s-inter"/></svg></button>
                    <button aria-label="Trim"><svg><use href="#s-trim"/></svg></button>
                    <button aria-label="Untrim"><svg><use href="#s-untrim"/></svg></button>
                    <button aria-label="Attach"><svg><use href="#s-attach"/></svg></button>
                    <button aria-label="Detach"><svg><use href="#s-detach"/></svg></button>
                    <button aria-label="Align"><svg><use href="#s-move"/></svg></button>
                    <button aria-label="Insert isoparms"><svg><use href="#s-insert"/></svg></button>
                    <button aria-label="Extend"><svg><use href="#s-extend"/></svg></button>
                    <button aria-label="Sculpt"><svg><use href="#s-sculpt"/></svg></button>
                    <button aria-label="Soft modify"><svg><use href="#s-softm"/></svg></button>
                    <button aria-label="Stitch"><svg><use href="#s-stitch"/></svg></button>
                    <button class="small" aria-label="Script"><svg><use href="#paw"/></svg></button>
                </div>
                <div class="arrows"><button class="up" aria-label="Previous"></button><button class="down" aria-label="Next"></button></div>
            </div>
        </div>
    </div>

    <div class="workspace">
        <!-- tool box -->
        <aside class="toolbox">
            <i class="grip"></i>
            <div class="tools">
                <button aria-label="Select"><svg><use href="#cursor"/></svg></button>
                <button aria-label="Lasso"><svg><use href="#lasso"/></svg></button>
                <button aria-label="Paint select"><svg><use href="#paint"/></svg></button>
                <button aria-label="Move"><svg><use href="#move"/></svg></button>
                <button aria-label="Rotate"><svg><use href="#rotate"/></svg></button>
                <button class="active" aria-label="Scale"><svg><use href="#scale"/></svg></button>
                <button aria-label="Universal"><svg><use href="#universal"/></svg></button>
                <button aria-label="Soft modification"><svg><use href="#softmod"/></svg></button>
                <button aria-label="Show manipulator"><svg><use href="#manip"/></svg></button>
                <button aria-label="Last tool"><svg><use href="#lasttool"/></svg></button>
            </div>
            <div class="layouts">
                <button aria-label="Single view"><svg><use href="#lay-single"/></svg></button>
                <button aria-label="Four view"><svg><use href="#lay-four"/></svg></button>
                <button aria-label="Outliner"><svg><use href="#lay-outliner"/></svg></button>
                <button aria-label="Graph"><svg><use href="#lay-graph"/></svg></button>
                <button aria-label="Hypershade"><svg><use href="#lay-shade"/></svg></button>
                <button aria-label="Hypergraph"><svg><use href="#lay-hyper"/></svg></button>
                <button class="more" aria-label="More layouts"></button>
            </div>
            <button class="script" aria-label="Script"><svg><use href="#paw"/></svg></button>
        </aside>

        <!-- viewport -->
        <main class="view">
            <nav class="view-menu">
                <a href="#">View</a><a href="#">Shading</a><a href="#">Lighting</a><a href="#">Show</a><a href="#">Renderer</a><a href="#">Panels</a>
            </nav>
            <div class="view-tools">
                <button aria-label="Camera"><svg><use href="#v-cam"/></svg></button>
                <button aria-label="Camera attributes"><svg><use href="#v-camattr"/></svg></button>
                <button aria-label="Bookmarks"><svg><use href="#v-book"/></svg></button>
                <button aria-label="Image plane"><svg><use href="#v-img"/></svg></button>
                <button aria-label="Pan zoom"><svg><use href="#v-pan"/></svg></button>
                <i class="sep"></i>
                <button class="lit" aria-label="Grid"><svg><use href="#v-grid"/></svg></button>
                <button aria-label="Film gate"><svg><use href="#v-film"/></svg></button>
                <button aria-label="Resolution gate"><svg><use href="#v-res"/></svg></button>
                <button aria-label="Gate mask"><svg><use href="#v-gate"/></svg></button>
                <button aria-label="Field chart"><svg><use href="#v-chart"/></svg></button>
                <button aria-label="Safe action"><svg><use href="#v-safe"/></svg></button>
                <button aria-label="Safe title"><svg><use href="#v-text"/></svg></button>
                <i class="sep"></i>
                <button class="lit" aria-label="Wireframe"><svg><use href="#v-wire"/></svg></button>
                <button aria-label="Shaded"><svg><use href="#s-cube"/></svg></button>
                <button aria-label="Wireframe on shaded"><svg><use href="#v-wshade"/></svg></button>
                <button aria-label="Textured"><svg><use href="#v-check"/></svg></button>
                <button aria-label="Lights"><svg><use href="#v-light"/></svg></button>
                <button aria-label="Flat"><svg><use href="#v-flat"/></svg></button>
                <button aria-label="High quality"><svg><use href="#v-gold"/></svg></button>
                <i class="sep"></i>
                <button aria-label="Isolate select"><svg><use href="#v-iso"/></svg></button>
                <i class="sep"></i>
                <button class="dark" aria-label="X-ray"><svg><use href="#v-wire"/></svg></button>
                <button class="dark" aria-label="X-ray active"><svg><use href="#v-xray"/></svg></button>
                <button class="dark" aria-label="X-ray joints"><svg><use href="#v-joint"/></svg></button>
            </div>
            <div class="canvas">
                <svg viewBox="32 132 942 546" preserveAspectRatio="xMidYMid slice">
                    <defs>
                        <linearGradient id="fade" gradientUnits="userSpaceOnUse" x1="0" y1="280" x2="0" y2="400"><stop offset="0" stop-color="#8d989f" stop-opacity="0"/><stop offset="1" stop-color="#8d989f" stop-opacity=".6"/></linearGradient>
                        <linearGradient id="face" x1="0" y1="0" x2="0" y2="1"><stop offset="0" stop-color="#b5bbc8"/><stop offset="1" stop-color="#98a1b2"/></linearGradient>
                        <linearGradient id="curve" gradientUnits="userSpaceOnUse" x1="540" y1="0" x2="640" y2="0"><stop offset="0" stop-color="#f0e8e4"/><stop offset="1" stop-color="#74c5da"/></linearGradient>
                    </defs>

                    <!-- ground grid -->
                    <path d="M87 280V678M189.500 280V678M292 280V678M497 280V678M599 280V678M701 280V678M803.500 280V678M905.500 280V678" stroke="url(#fade)" stroke-width="1.300"/>
                    <path d="M32 316.500H974M32 418.500H974M32 521H974M32 623.500H974" stroke="#8d989f" stroke-opacity=".55"/>

                    <!-- wireframe surfaces -->
                    <g fill="none" stroke="#141b60">
                        <path d="M282 132L291 420 299 678M290 132L298.500 420 306 678M314.500 132L321 420 327 678M351 132L354.500 420 358 678M283 185H434"/>
                        <path d="M394 132V678" stroke="#0d0f14" stroke-width="1.500"/>
                        <path d="M432.800 132V678M434.800 132V678" stroke="#02027c" stroke-width="1.400"/>
                        <circle cx="600.500" cy="383.500" r="102.500"/>
                        <ellipse cx="600.500" cy="383.500" rx="72.500" ry="102.500"/>
                        <circle cx="600.500" cy="382.500" r="30.500"/>
                        <path d="M600.500 281V486M498 383.500H703M529 311.500H673M529 456.500H673"/>
                        <path d="M949 132C930 185 890 235 835 266 800 284 765 292 733 292 680 290 655 265 600 265 540 262 505 291 485 324 474 348 470 372 470 395 471 440 495 480 545 493 610 512 700 506 760 488 850 463 920 410 974 332"/>
                    </g>

                    <!-- control hull -->
                    <g fill="none" stroke="#ab18ae">
                        <path d="M800 248L724 164 788 514"/>
                        <path d="M568 550L803 562M769 558L845 566M769 558L778 537"/>
                        <path d="M542 267L440 283"/>
                    </g>
                    <path d="M407 292L426 583 368 503 568 550M560 266L600 263 800 248" fill="none" stroke="#c69c82"/>

                    <!-- selected curve -->
                    <path d="M413 524C450 522 480 531 520 536 610 550 700 558 803 562 788 555 781 551 780 538 780 500 778 470 769 410L752 300C748 270 747 240 749 224L751 218 755 213 759 217 757 227C748 238 735 243 722 246 690 255 640 260 600 263" fill="none" stroke="#74c5da"/>
                    <path d="M600 263C540 268 460 276 407 292" fill="none" stroke="url(#curve)" stroke-width="1.300"/>
                    <path d="M407 292C411 370 415 430 415 465V498L412 525 408 536 403 539 399 535 402 529 413 524" fill="none" stroke="#eee4dc" stroke-width="1.300"/>
                    <path d="M722.500 162.500h3v3h-3zM798.500 246.500h3v3h-3zM786.500 512.500h3v3h-3zM767.500 556.500h3v3h-3zM843.500 564.500h3v3h-3zM566.500 548.500h3v3h-3zM366.500 502h3v3h-3zM424.500 581.500h3v3h-3zM541 266h2v2h-2z" fill="#c414c4"/>

                    <!-- scale manipulator -->
                    <path d="M407 193V212M403 244.500H411M407 266V288" stroke="#3d8a4a"/>
                    <path d="M411 293.500H562" stroke="#98a0a8" stroke-opacity=".35"/>
                    <path d="M404 130h6v6h-6z" fill="#16e016"/>
                    <path d="M563.500 290h6v6h-6z" fill="#0808e6"/>
                    <path d="M403.500 289.500h7v7h-7z" fill="#f4f01c" stroke="#fff"/>
                    <path d="M407.500 292.500V300l2-1.500 2 4 1.500-1-1.500-3.500h2.500z" fill="#fff" stroke="#333" stroke-width=".5"/>

                    <!-- view cube -->
                    <path d="M923 153h34v34h-34z" fill="#3f4858" opacity=".3"/>
                    <path d="M921.500 151h33.500v33h-33.500z" fill="url(#face)"/>
                    <text class="cube-label" x="938" y="170" text-anchor="middle">RIGHT</text>
                    <path d="M922 185Q935 165 941 151" fill="none" stroke="#6a7588" stroke-width=".7"/>

                    <!-- axis and camera name -->
                    <text class="axis" x="46" y="649" fill="#28d828">y</text>
                    <text class="axis" x="37" y="660" fill="#1414c8">z</text>
                    <text class="axis" x="46" y="660" fill="#b05020">x</text>
                    <path d="M41 660L48 661" stroke="#1414c8"/>
                    <path d="M48.500 652V661" stroke="#8a8a20"/>
                    <text class="camera" x="492" y="672">side</text>
                </svg>
            </div>
        </main>

        <!-- tool settings -->
        <section class="settings">
            <header class="dock-title">
                <i class="dots"></i><span>Tool Settings</span><i class="dots"></i>
                <button aria-label="Float">❐</button><button aria-label="Close">✕</button>
            </header>
            <div class="tool-head">
                <span>Scale Tool</span>
                <button class="btn reset-tool">Reset Tool</button>
                <button class="btn tool-help">Tool Help</button>
            </div>
            <div class="scroll">
                <form class="scroll-body">
                    <button type="button" class="section"><i></i>Scale Settings</button>
                    <div class="body">
                        <div class="row">
                            <span class="lbl">Scale Axis:</span>
                            <label class="half"><input type="radio" name="axis" checked>Object</label>
                            <label><input type="radio" name="axis">Local</label>
                        </div>
                        <div class="row">
                            <span class="lbl"></span>
                            <label class="half"><input type="radio" name="axis">World</label>
                            <label><input type="radio" name="axis">Normal</label>
                        </div>
                        <div class="row">
                            <span class="lbl"></span>
                            <label class="half"><input type="radio" name="axis">Along rotation axis</label>
                            <label><input type="radio" name="axis">Normals average</label>
                        </div>
                        <div class="row"><span class="lbl"></span><label><input type="radio" name="axis">Along live object axis</label></div>
                        <div class="row"><span class="lbl"></span><label><input type="radio" name="axis">Custom axis orientation</label></div>
                        <div class="row fields">
                            <span class="lbl"></span>
                            <input class="field" type="text" aria-label="Axis X" value="-1.6946">
                            <input class="field" type="text" aria-label="Axis Y" value="-0.2004">
                            <input class="field" type="text" aria-label="Axis Z" value="-1.0120">
                        </div>
                        <div class="set-buttons">
                            <button type="button" class="btn">Set to Point</button>
                            <button type="button" class="btn">Set to Edge</button>
                            <button type="button" class="btn">Set to Face</button>
                        </div>
                        <div class="row">
                            <span class="lbl">Scale pivot:</span>
                            <label class="third"><input type="radio" name="pivot" checked>Default</label>
                            <label class="third"><input type="radio" name="pivot">Object</label>
                            <label><input type="radio" name="pivot">Manip</label>
                        </div>
                        <div class="row tight"><label class="lbl" for="pct">Preserve Child Transform</label><input type="checkbox" id="pct"></div>
                        <div class="row tight"><label class="lbl" for="puv">Preserve UVs</label><input type="checkbox" id="puv"></div>
                        <hr>
                        <div class="row tight"><label class="lbl" for="disc">Discrete scale:</label><input type="checkbox" id="disc"></div>
                        <div class="row tight off"><label class="lbl" for="rel">Relative:</label><input type="checkbox" id="rel" disabled></div>
                        <div class="row off"><label class="lbl" for="step">Step size:</label><input class="field" type="text" id="step" value="1.00" disabled></div>
                    </div>

                    <button type="button" class="section"><i></i>Common Selection Options</button>
                    <div class="body selection">
                        <div class="row"><span class="lbl">Selection Style:</span><label><input type="radio" name="style" checked>Marquee</label></div>
                        <div class="row"><span class="lbl"></span><label class="indent"><input type="checkbox">Camera based selection</label></div>
                        <div class="row"><span class="lbl"></span><label><input type="radio" name="style">Drag</label></div>
                        <div class="row"><span class="lbl"></span><label class="indent"><input type="checkbox" checked>Camera based paint selection</label></div>
                    </div>

                    <button type="button" class="section"><i></i>Soft Selection</button>
                    <div class="body soft">
                        <div class="row tall"><label class="lbl" for="soft">Soft Select:</label><input type="checkbox" id="soft"><button type="button" class="btn reset">Reset</button></div>
                        <div class="row tall off"><label class="lbl" for="fmode">Falloff mode:</label><span class="combo"><select id="fmode" disabled><option>Volume</option></select></span></div>
                        <div class="row off"><label class="lbl" for="frad">Falloff radius:</label><input class="field" type="text" id="frad" value="5.00" disabled><input type="range" aria-label="Falloff radius" min="0" max="100" value="4" disabled></div>
                        <div class="row off ramp">
                            <span class="lbl">Falloff curve:</span>
                            <svg class="falloff" viewBox="0 0 122 56">
                                <path d="M5.500 2.500h111v44H5.500z" fill="#959595"/>
                                <path d="M5.500 2.500C50 2 65 46 116.500 46H5.500z" fill="#6a6a6a"/>
                                <path d="M5.500 2.500C50 2 65 46 116.500 46" fill="none" stroke="#222"/>
                                <path d="M5.500 2.500h111v44H5.500z" fill="none" stroke="#222"/>
                                <circle cx="5.500" cy="51" r="2" fill="#fff" stroke="#eee"/><path d="M4 49.500l3 3m0-3l-3 3" stroke="#222"/>
                                <circle cx="116" cy="46" r="2" fill="#555" stroke="#ddd"/>
                                <path d="M113.500 48.500h5v5h-5z" fill="#222" stroke="#eee"/><path d="M114 49l4 4m0-4l-4 4" stroke="#eee"/>
                            </svg>
                        </div>
                        <div class="row tall off"><label class="lbl" for="interp">Interpolation:</label><span class="combo"><select id="interp" disabled><option>None</option></select></span></div>
                        <div class="row tall off">
                            <span class="lbl">Curve presets:</span>
                            <div class="presets">
                                <button type="button" aria-label="Soft"><svg viewBox="0 0 13 13"><path d="M1 1q4 1 6 6t5 5H1z"/></svg></button>
                                <button type="button" aria-label="Medium"><svg viewBox="0 0 13 13"><path d="M1 1q6 1 8 5t2 6H1z"/></svg></button>
                                <button type="button" aria-label="Linear"><svg viewBox="0 0 13 13"><path d="M1 1l11 11H1z"/></svg></button>
                                <button type="button" aria-label="Hard"><svg viewBox="0 0 13 13"><path d="M1 1h11v11H1z" stroke="none"/></svg></button>
                                <button type="button" aria-label="Crater"><svg viewBox="0 0 13 13"><path d="M1 12q3-1 4-9h2q2 8 4 9z"/></svg></button>
                                <button type="button" aria-label="Wave"><svg viewBox="0 0 13 13"><path d="M1 12q2-9 3-9t2 8q2-7 3-6t2 7z"/></svg></button>
                                <button type="button" aria-label="Stairs"><svg viewBox="0 0 13 13"><path d="M1 3h3v2h3v3h3v2h2v2H1z"/></svg></button>
                                <button type="button" aria-label="Ring"><svg viewBox="0 0 13 13"><path d="M3 12q2-3 3-10h1q1 7 3 10z"/></svg></button>
                                <button type="button" aria-label="Sine"><svg viewBox="0 0 13 13"><path d="M1 12L3 2h1l2 9L8 2h1l2 10z"/></svg></button>
                                <button type="button" aria-label="Custom"><svg viewBox="0 0 13 13"><circle cx="6.500" cy="7" r="4" fill="#bbb" stroke="#ddd"/><path d="M5 9q1-5 3 0"/></svg></button>
                            </div>
                        </div>
                        <div class="row off feedback"><label class="lbl" for="vpc">Viewport color:</label><input type="checkbox" id="vpc" checked disabled></div>
                        <div class="row off color">
                            <span class="lbl">Falloff color:</span>
                            <div class="color-ramp">
                                <div class="stops round"><i class="black"></i><i class="red"></i><i class="yellow"></i></div>
                                <div class="bar"></div>
                                <div class="stops"><i class="black"></i><i class="red"></i><i class="yellow"></i></div>
                            </div>
                        </div>
                    </div>
                </form>
                <div class="scrollbar">
                    <button class="up" aria-label="Scroll up"></button>
                    <div class="track"><div class="thumb"></div></div>
                    <button class="up" aria-label="Scroll up"></button>
                    <button class="down" aria-label="Scroll down"></button>
                </div>
            </div>
        </section>

        <nav class="side-tabs">
            <button class="active">Tool Settings</button>
            <button class="attr">Attribute Editor</button>
            <button class="chan">Channel Box / Layer Editor</button>
        </nav>
    </div>

    <!-- command line -->
    <div class="command">
        <label for="mel">MEL</label>
        <input type="text" id="mel">
        <output></output>
        <button aria-label="Script editor"><i></i></button>
    </div>

    <div class="helpline">
        <div class="help-text"><span>Scaling:</span><span>1.000</span><span>1.000</span><span>-1.000</span></div>
    </div>
</div>

</body>
</html>
```
FILE: styles.css
```css
* {
    box-sizing: border-box;
}
body {
    margin: 0;
    background: #000;
    color: #c8c8c8;
    font-family: "Open Sans", "Noto Sans", sans-serif;
    font-size: 7px;
    line-height: 10px;
}
button, input, select {
    margin: 0;
    padding: 0;
    border: 0;
    border-radius: 0;
    background: none;
    color: inherit;
    font: inherit;
}
button {
    display: flex;
    align-items: center;
    justify-content: center;
}
a {
    color: inherit;
    text-decoration: none;
}
.sprite {
    position: absolute;
    width: 0;
    height: 0;
}

.app {
    display: flex;
    flex-direction: column;
    height: 100vh;
    padding-top: 22px;
    background: linear-gradient(#000 22px, #444 22px);
    border-bottom: 3px solid #262626;
}

/* menu bar */
.menubar {
    display: flex;
    gap: 10px;
    justify-content: space-between;
    height: 11px;
    padding-left: 6px;
    padding-right: calc(100% - 449px);
    line-height: 8px;
    white-space: nowrap;
    border-bottom: 1px solid #333;
}
.menubar {
    gap: 9px;
}

/* status line */
.statusline {
    display: flex;
    align-items: center;
    height: 22px;
    padding: 0 5px 0 9px;
    border-bottom: 1px solid #393939;
}
.group {
    display: flex;
}
.masks {
    justify-content: space-between;
    width: 177px;
}
.group button {
    width: 17px;
    height: 17px;
}
.group svg {
    width: 13px;
    height: 13px;
}
.group .on {
    background: #545659;
    border: 1px solid #3a3a3a;
}
.group .warm {
    background: #70665a;
}
.sep {
    width: 8px;
    height: 11px;
    background: linear-gradient(90deg, transparent 3px, #777 3px, #777 4px, #2c2c2c 4px, #2c2c2c 5px, transparent 5px);
}
.tri {
    width: 13px;
    height: 8px;
    background: linear-gradient(#777, #777) center top / 5px 1px no-repeat;
}
.tri::after {
    content: "";
    display: block;
    width: 6px;
    height: 4px;
    margin: 3px auto 0;
    background: #777;
    clip-path: polygon(0 0, 100% 0, 50% 100%);
}
.slim {
    width: 10px;
    background: none;
}
.field {
    height: 12px;
    padding: 0 2px;
    background: #2a2a2a;
    color: #d0d0d0;
}
.mask {
    width: 60px;
}
.coord {
    display: flex;
    align-items: center;
    gap: 2px;
    margin-left: 2px;
}
.coord .field {
    width: 24px;
    height: 15px;
}
.side-toggles {
    margin-left: auto;
}
.combo {
    position: relative;
    display: flex;
    width: 44px;
    height: 13px;
    background: #505050;
    border: 1px solid #363636;
}
.combo::after {
    content: "";
    position: absolute;
    right: 2px;
    top: 4px;
    width: 6px;
    height: 4px;
    background: #a5a5a5;
    clip-path: polygon(0 0, 100% 0, 50% 100%);
}
.combo select {
    appearance: none;
    width: 100%;
    padding-left: 2px;
    opacity: 1;
    border-right: 10px solid #494949;
}
.combo-mode {
    width: 65px;
    margin-bottom: 3px;
    background: #5a5a5a;
}
.combo-mode select {
    border-right-color: #525252;
}

/* shelf */
.shelf {
    display: flex;
    height: 50px;
    padding: 2px 0 5px 10px;
    border-bottom: 1px solid #383838;
}
.shelf-menu {
    display: flex;
    flex-direction: column;
    align-items: center;
    justify-content: flex-end;
    gap: 5px;
    width: 14px;
    border: 1px solid #363636;
    background: #414141;
}
.shelf-menu .knob {
    width: 8px;
    height: 5px;
    background: #888;
}
.shelf-menu .tri {
    width: 12px;
    background: linear-gradient(#888, #888) center top / 12px 1px no-repeat;
}
.shelf-main {
    flex: 1;
    display: flex;
    flex-direction: column;
    margin-left: 2px;
}
.shelf-top {
    display: flex;
    height: 14px;
    padding: 2px 6px 0 0;
    border-bottom: 1px solid #333;
}
.shelf-tabs {
    display: flex;
    width: 717px;
}
.shelf-tabs button {
    flex: 1 0 auto;
    padding: 0 7px;
    border-right: 1px solid #363636;
    border-top: 1px solid #4b4b4b;
}
.shelf-tabs .active {
    background: #646464;
    color: #e0e0e0;
}
.trash {
    width: 11px;
    height: 11px;
    margin-left: auto;
}
.shelf-row {
    flex: 1;
    display: flex;
    align-items: center;
    justify-content: space-between;
    margin: 2px 5px 0 1px;
    border: 1px solid #333;
}
.shelf-icons {
    display: flex;
    justify-content: space-between;
    width: 583px;
    margin-left: 1px;
}
.shelf-icons button {
    width: 23px;
    height: 22px;
}
.shelf-icons svg {
    width: 20px;
    height: 19px;
}
.shelf-icons .small svg {
    width: 13px;
    height: 14px;
    margin-bottom: 8px;
}
.arrows {
    display: flex;
    flex-direction: column;
    gap: 1px;
}
.up, .down {
    width: 10px;
    height: 10px;
    background: #606060;
    border: 1px solid #373737;
}
.up::after, .down::after {
    content: "";
    width: 4px;
    height: 3px;
    background: #ddd;
    clip-path: polygon(0 0, 100% 0, 50% 100%);
}
.up::after {
    clip-path: polygon(50% 0, 100% 100%, 0 100%);
}

/* main area */
.workspace {
    flex: 1;
    display: flex;
    min-height: 0;
}
.toolbox {
    display: flex;
    flex-direction: column;
    width: 31px;
    padding: 3px 0 2px 4px;
    border-left: 1px solid #2e2e2e;
}
.toolbox button {
    flex: none;
    width: 22px;
    height: 22px;
}
.toolbox svg {
    width: 20px;
    height: 20px;
}
.grip {
    height: 3px;
    margin: 0 5px 3px 0;
    background: radial-gradient(circle, #6a6a6a 1px, transparent 1px) 0 0 / 3px 3px;
}
.tools {
    display: flex;
    flex-direction: column;
    justify-content: space-between;
    height: 245px;
}
.tools button {
    border: 1px solid #303030;
    box-shadow: inset 1px 1px #555;
}
.tools .active {
    background: #9b9b9b;
}
.layouts {
    display: flex;
    flex-direction: column;
    gap: 3px;
    margin-top: 10px;
}
.layouts svg {
    width: 22px;
    height: 22px;
}
.layouts .more {
    border: 1px solid #373737;
}
.layouts .more::after {
    content: "";
    width: 4px;
    height: 3px;
    background: #888;
    clip-path: polygon(0 0, 100% 0, 50% 100%);
}
.script {
    margin-top: auto;
    background: #2f2f2f;
}

.view {
    flex: 1;
    display: flex;
    flex-direction: column;
    min-width: 0;
    border: 1px solid #777;
    border-bottom-color: #666;
}
.view-menu {
    display: flex;
    gap: 9px;
    height: 13px;
    padding: 1px 5px;
}
.view-tools {
    display: flex;
    align-items: center;
    height: 13px;
    padding-left: 6px;
    border-left: 1px solid #888;
}
.view-tools button {
    width: 13px;
    height: 12px;
}
.view-tools svg {
    width: 11px;
    height: 11px;
}
.view-tools .sep {
    width: 9px;
    height: 7px;
}
.view-tools .lit {
    background: #5f656d;
}
.view-tools .dark {
    background: #2f2f2f;
}
.canvas {
    flex: 1;
    min-height: 0;
    background: linear-gradient(#8193ab, #6f7c90 20%, #5c6677 34%, #4d5661 48%, #3a404a 63%, #292c34 78%, #1d1e22 90%, #17181a);
}
.canvas svg {
    display: block;
    width: 100%;
    height: 100%;
}
.cube-label {
    fill: #6b7486;
    font-size: 8px;
    font-weight: 600;
}
.axis {
    font-family: "DejaVu Sans Mono", monospace;
    font-size: 9px;
    font-weight: bold;
}
.camera {
    fill: #06341a;
    font-size: 8px;
}

/* tool settings */
.settings {
    display: flex;
    flex-direction: column;
    width: 290px;
    padding-left: 5px;
}
.dock-title {
    display: flex;
    align-items: center;
    height: 12px;
}
.dots {
    flex: 1;
    height: 3px;
    margin: 0 6px 0 2px;
    background: radial-gradient(circle, #6a6a6a 1px, transparent 1px) 0 0 / 4px 3px;
}
.dock-title span + .dots {
    margin: 0 2px 0 6px;
}
.dock-title button {
    width: 8px;
    height: 8px;
    margin-right: 2px;
    background: #111;
    color: #aaa;
}
.tool-head {
    display: flex;
    align-items: center;
    height: 20px;
    padding-right: 2px;
}
.btn {
    height: 15px;
    background: linear-gradient(#646464, #585858);
    border: 1px solid #383838;
    color: #d8d8d8;
}
.reset-tool {
    width: 65px;
    margin: 0 4px 0 auto;
}
.tool-help {
    width: 54px;
}
.scroll {
    flex: 1;
    display: flex;
    gap: 2px;
    min-height: 0;
    margin: 1px 2px 1px 2px;
    padding: 1px 2px 0 1px;
    border: 1px solid #353535;
}
.scroll-body {
    flex: 1;
    overflow: hidden;
}
.section {
    justify-content: flex-start;
    width: 100%;
    height: 14px;
    padding-left: 5px;
    background: #505050;
    border-top: 1px solid #5c5c5c;
    border-bottom: 1px solid #343434;
    color: #dcdcdc;
    font-weight: bold;
}
.section i {
    width: 6px;
    height: 4px;
    margin-right: 10px;
    background: #ddd;
    clip-path: polygon(0 0, 100% 0, 50% 100%);
}
.body {
    padding: 5px 0 1px;
    border-left: 1px solid #393939;
    border-right: 1px solid #393939;
}
.row {
    display: flex;
    align-items: center;
    height: 14px;
    white-space: nowrap;
}
.row label {
    display: flex;
    align-items: center;
}
.row .lbl {
    display: block;
    flex: none;
    width: 86px;
    margin-right: 6px;
    text-align: right;
}
.row.tight {
    height: 11px;
}
.row.tall {
    height: 15px;
}
.half {
    width: 84px;
}
.third {
    width: 57px;
}
.indent {
    margin-left: 11px;
}
.row .field {
    width: 39px;
    height: 11px;
}
.fields {
    gap: 4px;
}
.fields .lbl {
    margin-right: 2px;
}
.off {
    color: #858585;
}
.off .field {
    color: #777;
    background: #303030;
}
input[type="radio"] {
    appearance: none;
    width: 6px;
    height: 6px;
    margin-right: 5px;
    border-radius: 50%;
    background: #2c2c2c;
}
input[type="radio"]:checked {
    background: #e4e4e4;
    border: 1px solid #555;
}
input[type="checkbox"] {
    appearance: none;
    width: 9px;
    height: 9px;
    background: #2a2a2a;
}
label input[type="checkbox"] {
    margin-right: 3px;
}
input[type="checkbox"]:checked::after {
    content: "";
    display: block;
    width: 3px;
    height: 6px;
    margin-left: 3px;
    border: solid #eee;
    border-width: 0 1px 1px 0;
    transform: rotate(40deg);
}
input[type="checkbox"]:disabled::after {
    border-color: #aaa;
}
.set-buttons {
    display: flex;
    flex-direction: column;
    gap: 2px;
    margin: 5px 0 2px 85px;
}
.set-buttons .btn {
    width: 133px;
}
hr {
    height: 2px;
    margin: 0;
    border: 0;
    border-top: 1px solid #333;
    background: #4c4c4c;
}
.selection {
    padding: 2px 0 0;
}
.selection .row {
    height: 14px;
}
.soft {
    padding-top: 2px;
}
.reset {
    width: 31px;
    margin-left: 85px;
}
input[type="range"] {
    appearance: none;
    width: 124px;
    height: 9px;
    margin-left: 3px;
    background: linear-gradient(#2c2c2c, #2c2c2c) center / 100% 1px no-repeat;
}
input[type="range"]::-webkit-slider-thumb {
    appearance: none;
    width: 7px;
    height: 8px;
    background: #4a4a4a;
    border: 1px solid #2c2c2c;
    border-radius: 1px 1px 3px 3px;
}
.row.ramp {
    height: 62px;
}
.falloff {
    align-self: flex-start;
    width: 122px;
    height: 56px;
}
.presets {
    display: flex;
    justify-content: space-between;
    width: 151px;
}
.presets button {
    width: 13px;
    height: 13px;
    background: #a8a8a8;
    border-radius: 2px;
}
.presets svg {
    width: 13px;
    height: 13px;
    fill: #969696;
    stroke: #777;
}
.feedback {
    margin: 6px 0 5px;
}
.row.color {
    height: 50px;
}
.color-ramp {
    width: 122px;
}
.stops {
    display: flex;
    justify-content: space-between;
    padding: 1px 2px;
}
.stops i {
    width: 7px;
    height: 7px;
    border: 1px solid #222;
}
.round i {
    border-radius: 50%;
}
.black {
    background: #000;
}
.red {
    background: #d81414;
}
.yellow {
    background: #f4f030;
}
.bar {
    height: 31px;
    margin: 0 5px;
    border: 1px solid #1a1a1a;
    background: linear-gradient(90deg, #101010, #d01010 50%, #cfc010);
}
.scrollbar {
    display: flex;
    flex-direction: column;
    width: 10px;
}
.track {
    flex: 1;
    background: #383838;
}
.thumb {
    height: 74%;
    background: #606060;
    border: 1px solid #444;
}

.side-tabs {
    width: 16px;
    padding-right: 4px;
    background: linear-gradient(90deg, #444 12px, #2e2e2e 12px, #2e2e2e 13px, #444 13px);
}
.side-tabs button {
    width: 12px;
    height: 56px;
    background: #3d3d3d;
    border: 1px solid #303030;
    writing-mode: vertical-rl;
    white-space: nowrap;
}
.side-tabs .active {
    background: #636363;
}
.side-tabs .attr {
    height: 68px;
}
.side-tabs .chan {
    height: 102px;
}

/* command line */
.command {
    display: flex;
    align-items: center;
    height: 22px;
    padding: 0 5px 0 16px;
    border-top: 1px solid #3a3a3a;
    border-bottom: 1px solid #333;
}
.command label {
    width: 24px;
}
.command input {
    flex: 1;
    height: 15px;
    margin-right: 5px;
    background: #2b2b2b;
}
.command output {
    flex: 1;
    height: 15px;
    background: #000;
}
.command button {
    width: 12px;
}
.command button i {
    width: 9px;
    height: 8px;
    background: #333;
    border: 1px solid #ddd;
    border-top-width: 3px;
}
.helpline {
    height: 16px;
    padding: 2px 4px 0 9px;
}
.help-text {
    display: flex;
    gap: 12px;
    padding: 2px 8px 0;
    border-left: 1px solid #333;
    border-top: 1px solid #3a3a3a;
}
```
